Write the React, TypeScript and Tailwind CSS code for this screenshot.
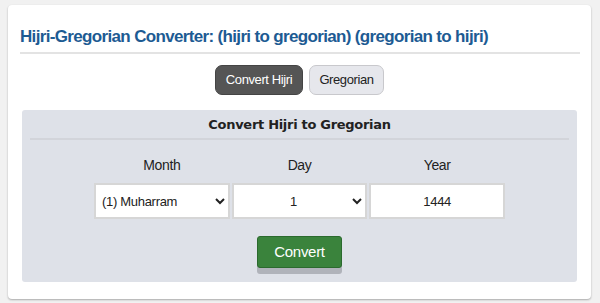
import React, { useState } from 'react';

const months = [
  '(1) Muharram',
  '(2) Safar',
  "(3) Rabi' al-Awwal",
  "(4) Rabi' al-Thani",
  '(5) Jumada al-Awwal',
  '(6) Jumada al-Thani',
  '(7) Rajab',
  "(8) Sha'ban",
  '(9) Ramadan',
  '(10) Shawwal',
  "(11) Dhu al-Qi'dah",
  '(12) Dhu al-Hijjah',
];

const App: React.FC = () => {
  const [tab, setTab] = useState<'hijri' | 'gregorian'>('hijri');
  const [month, setMonth] = useState('1');
  const [day, setDay] = useState('1');
  const [year, setYear] = useState('1444');

  return (
    <div className="min-h-screen bg-[#f1f1f1] px-2 pt-[5px] font-['Liberation_Sans',Arial,sans-serif]">
      <div className="h-[294px] w-[583px] rounded-[4px] bg-white px-3 pt-[22px] shadow-[0_1px_2px_rgba(0,0,0,0.3)]">
        <h2 className="text-[17px] font-bold leading-5 tracking-[-0.66px] text-[#1d5b93]">
          Hijri-Gregorian Converter: (hijri to gregorian) (gregorian to hijri)
        </h2>
        <div className="mt-[5px] h-[2px] w-[560px] bg-[#e3e3e3]" />

        <div className="mt-[11px] flex justify-center gap-[6px]">
          <button
            onClick={() => setTab('hijri')}
            className={`h-[30px] w-[88px] rounded-[7px] border text-[13px] tracking-[-0.4px] ${
              tab === 'hijri'
                ? 'border-[#444] bg-[#555555] text-white'
                : 'border-[#c8c8cc] bg-[#e6e7ec] text-[#222]'
            }`}
          >
            Convert Hijri
          </button>
          <button
            onClick={() => setTab('gregorian')}
            className={`h-[30px] w-[75px] rounded-[7px] border text-[13px] tracking-[-0.4px] ${
              tab === 'gregorian'
                ? 'border-[#444] bg-[#555555] text-white'
                : 'border-[#c8c8cc] bg-[#e6e7ec] text-[#222]'
            }`}
          >
            Gregorian
          </button>
        </div>

        <div className="mx-[2px] mt-[15px] h-[172px] rounded-[3px] bg-[#dee1e8] px-2 pt-[5px]">
          <h3 className="text-center font-['DejaVu_Sans',sans-serif] text-[13px] font-bold leading-5 tracking-[-0.3px] text-[#222]">
            Convert Hijri to Gregorian
          </h3>
          <div className="mt-[3px] h-[2px] bg-[#d2d4da]" />

          <div className="mx-auto mt-[15px] grid w-[411px] grid-cols-3 gap-x-[2px] text-[14px] tracking-[-0.4px] text-[#222]">
            <label className="text-center leading-5">Month</label>
            <label className="text-center leading-5">Day</label>
            <label className="text-center leading-5">Year</label>
            <select
              value={month}
              onChange={e => setMonth(e.target.value)}
              className="mt-[8px] h-[36px] border-2 border-[#d6d6d6] bg-white px-[2px] text-[13px] tracking-[-0.3px] text-[#222]"
            >
              {months.map((m, i) => (
                <option key={m} value={String(i + 1)}>
                  {m}
                </option>
              ))}
            </select>
            <select
              value={day}
              onChange={e => setDay(e.target.value)}
              className="mt-[8px] h-[36px] border-2 border-[#d6d6d6] bg-white px-[4px] text-center text-[13px] text-[#222]"
            >
              {Array.from({ length: 30 }, (_, i) => (
                <option key={i} value={String(i + 1)}>
                  {i + 1}
                </option>
              ))}
            </select>
            <input
              value={year}
              onChange={e => setYear(e.target.value)}
              className="mt-[8px] h-[36px] border-2 border-[#d6d6d6] bg-white px-[4px] text-center text-[13px] tracking-[-0.3px] text-[#222]"
            />
          </div>

          <div className="mt-[17px] flex justify-center">
            <button className="h-[32px] w-[85px] rounded-[3px] border border-[#2b6a2e] bg-[#3a833c] text-[15px] tracking-[-0.3px] text-white shadow-[0_6px_0_#b0b3ba]">
              Convert
            </button>
          </div>
        </div>
      </div>
    </div>
  );
};

export default App;
